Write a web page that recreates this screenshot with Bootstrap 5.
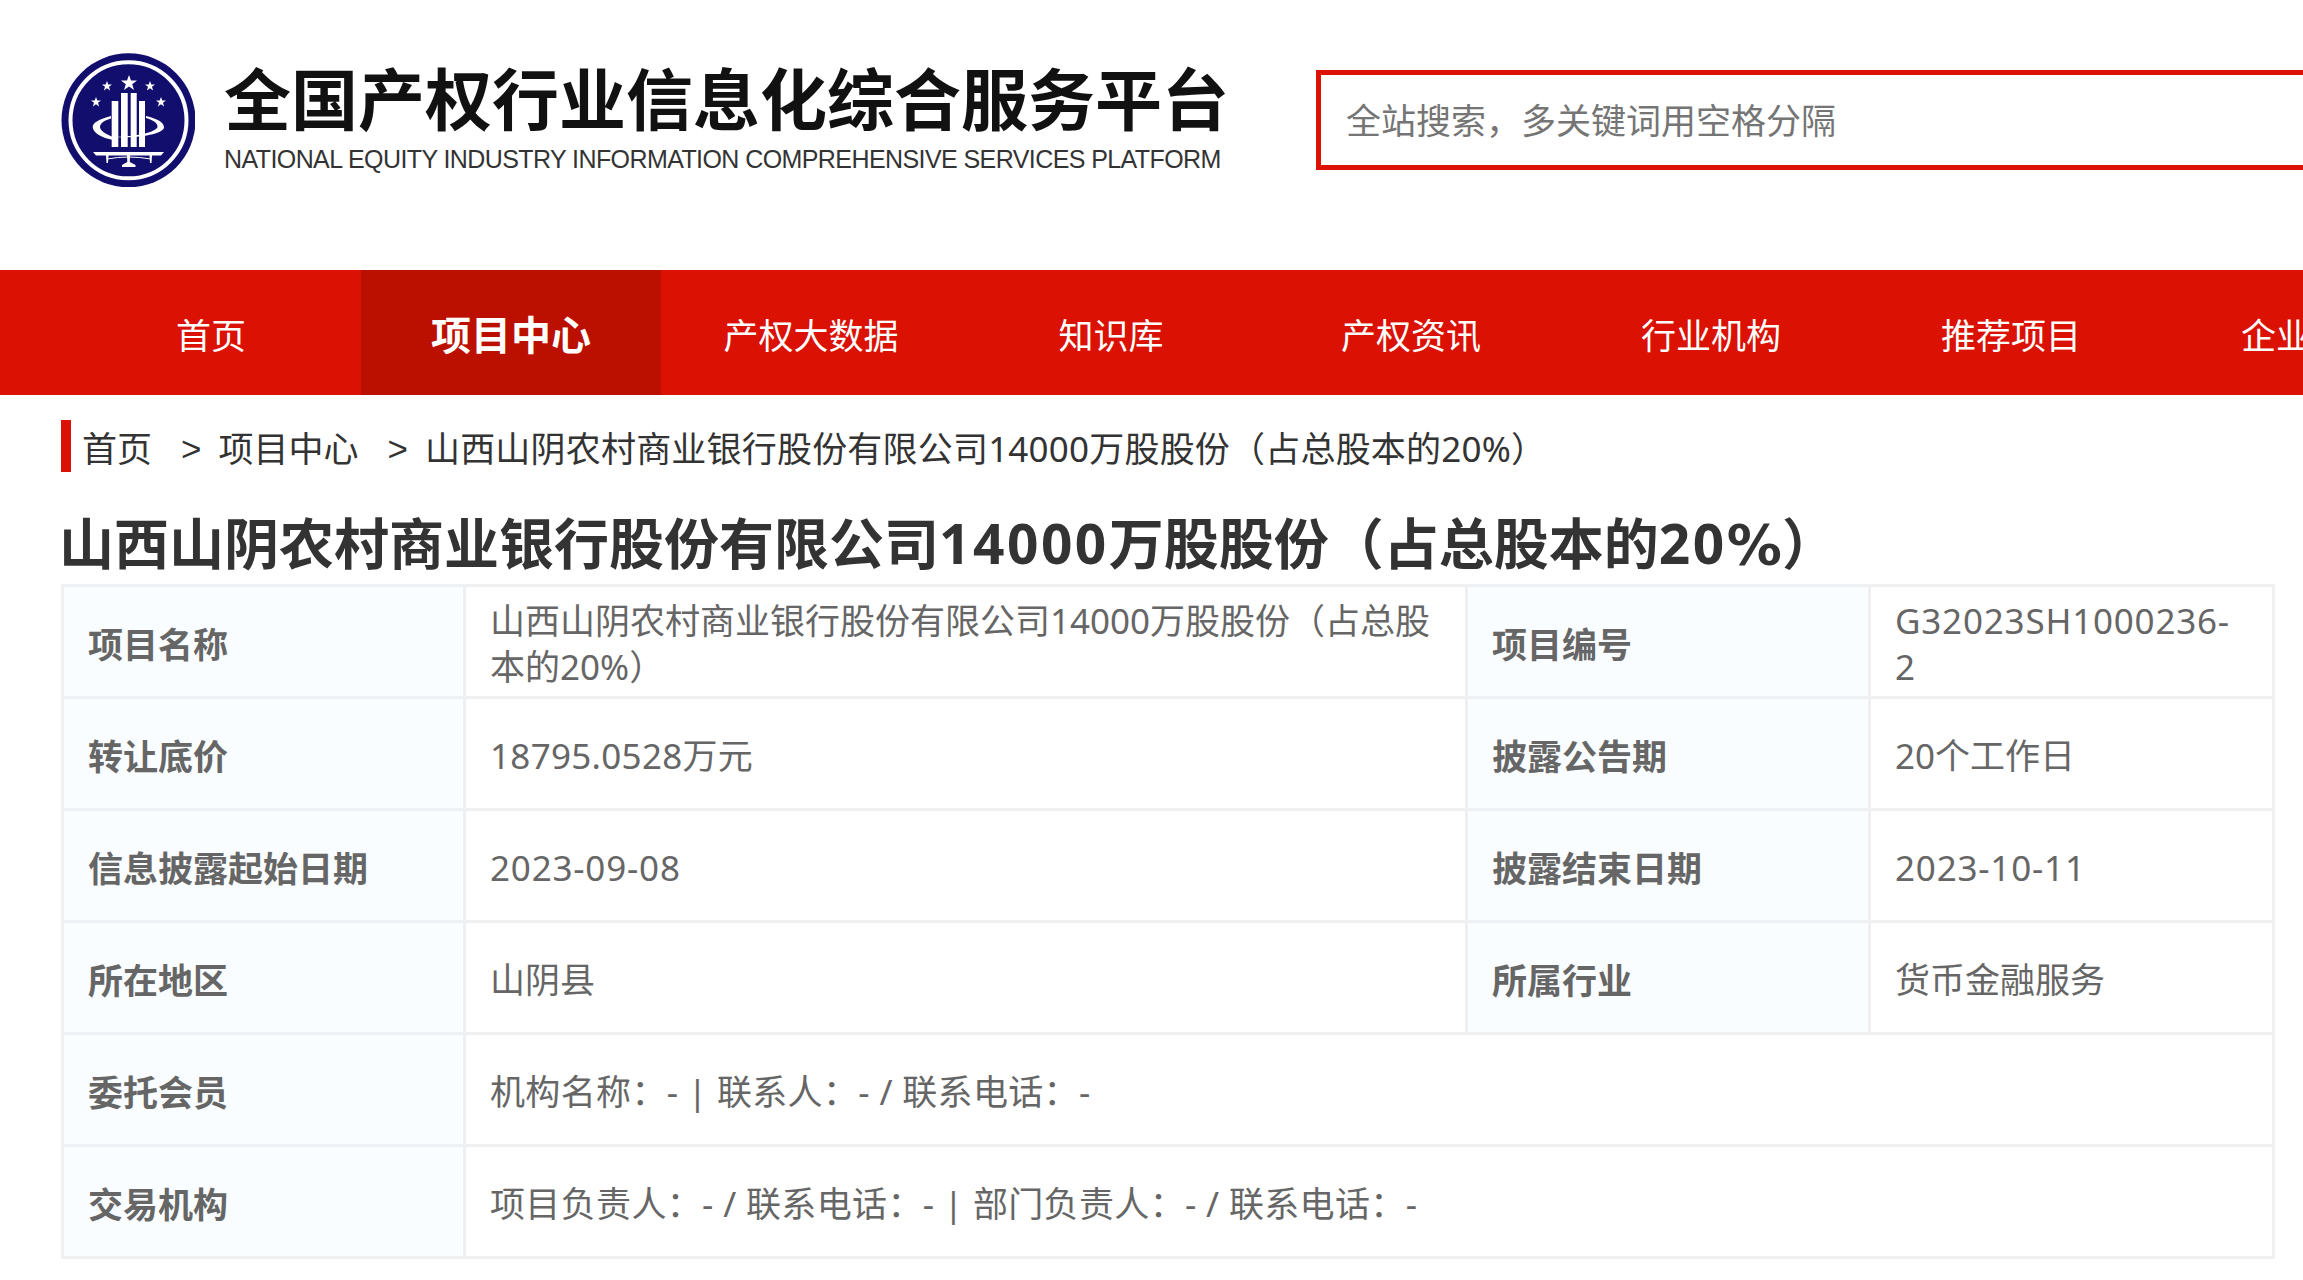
<!DOCTYPE html>
<html lang="zh-CN">
<head>
<meta charset="UTF-8" />
<meta name="viewport" content="width=device-width, initial-scale=1.0" />
<title>山西山阴农村商业银行股份有限公司14000万股股份（占总股本的20%）</title>
<link href="https://cdn.jsdelivr.net/npm/bootstrap@5.3.0/dist/css/bootstrap.min.css" rel="stylesheet" />
<style>
  html, body { overflow-x: hidden; }
  body { font-family: "Noto Sans", "Noto Sans CJK SC", sans-serif; color: #333; background: #fff; }
  .site-head { height: 270px; padding: 53px 0 0 61px; width: 2303px; overflow: hidden; }
  .site-logo { width: 134px; height: 134px; flex-shrink: 0; margin-right: 29px; }
  .site-name { width: 1001px; margin-right: 91px; flex-shrink: 0; white-space: nowrap; }
  .site-name-cn { font-family: "Noto Sans CJK SC", sans-serif; font-weight: 700; font-size: 67px; line-height: 80px; color: #111; margin-top: 3px; }
  .site-name-en { font-family: "Liberation Sans", sans-serif; font-size: 25px; line-height: 28px; letter-spacing: -.58px; color: #333; margin-top: 9px; }
  .site-search { width: 1200px; height: 100px; margin-top: 17px; flex-shrink: 0; border: 5px solid #da1103; font-size: 35px; padding: 0 25px; color: #333; background: #fff; }
  .site-search::placeholder { color: #757575; opacity: 1; }
  .main-nav { height: 125px; background: #da1103; padding-left: 61px; width: 2303px; overflow: hidden; }
  .main-nav .nav-link { width: 300px; height: 125px; padding: 7px 0 0; display: flex; align-items: center; justify-content: center; color: #fff; font-size: 35px; white-space: nowrap; }
  .main-nav .nav-link.active { background: #bb0f00; font-size: 40px; font-weight: 700; padding: 5px 0 0; }
  .page-body { padding: 25px 30px 0 61px; }
  .crumbs { border-left: 10px solid #da1103; height: 52px; padding: 3px 0 0 11px; font-size: 35px; line-height: 52px; color: #333; white-space: nowrap; }
  .crumb-sep { margin: 0 17px 0 29px; font-family: "Liberation Sans", sans-serif; }
  .crumb-last { letter-spacing: .2px; }
  .pct-wide { font-family: "DejaVu Sans", sans-serif; }
  .page-title { font-weight: 700; font-size: 55px; line-height: 70px; height: 70px; color: #333; margin: 36px 0 6px -2px; white-space: nowrap; }
  .title-num { letter-spacing: 2.5px; }
  .info-table { table-layout: fixed; width: 2211px; margin: 0; border-collapse: collapse; border: 3px solid #eef0f2; }
  .info-table th, .info-table td { border: 3px solid #eef0f2; padding: 10px 24px 6px; height: 112px; font-size: 35px; line-height: 46px; color: #666; vertical-align: middle; background: #fff; box-shadow: none; }
  .info-table th { background: #f9fdff; font-weight: 700; padding: 11px 24px 5px; }
  .info-table td.num-cell { letter-spacing: .8px; }
  .info-table td.money-cell { letter-spacing: .3px; }
  .info-table td.contact-cell { letter-spacing: .35px; }
</style>
</head>
<body>
  <header class="site-head d-flex align-items-start">
    <svg class="site-logo" viewBox="21 23 134 134" aria-label="全国产权行业信息化综合服务平台">
      <circle cx="88.500" cy="90.300" r="67" fill="#120e6e" />
      <circle cx="88.500" cy="90.300" r="58" fill="none" stroke="#fff" stroke-width="4" />
      <g fill="#fff">
        <polygon points="89,45 91,50.6 97,50.6 92.2,54.2 94,60 89,56.5 84,60 85.8,54.2 81,50.6 87,50.6" />
        <polygon points="67,51 68.3,54.5 72,54.5 69,56.8 70.1,60.4 67,58.2 63.9,60.4 65,56.8 62,54.5 65.7,54.5" />
        <polygon points="110,51 111.3,54.5 115,54.5 112,56.8 113.1,60.4 110,58.2 106.9,60.4 108,56.8 105,54.5 108.7,54.5" />
        <polygon points="56,67 57.3,70.5 61,70.5 58,72.8 59.1,76.4 56,74.2 52.9,76.4 54,72.8 51,70.5 54.7,70.5" />
        <polygon points="121,67 122.3,70.5 126,70.5 123,72.8 124.1,76.4 121,74.2 117.9,76.4 119,72.8 116,70.5 119.7,70.5" />
        <rect x="71.700" y="71" width="6.600" height="46" />
        <rect x="81" y="63" width="6.700" height="54" />
        <rect x="90.700" y="63" width="6" height="54" />
        <rect x="99" y="71" width="6" height="46" />
        <path d="M71 86C59 89 52.500 93 52.700 97C53 103 62 108 73 110L73 107C65 104 59.500 100 60 96.500C60.500 93 65 90 71 88.500Z" />
        <path d="M106 86C117 88.500 124.300 92.500 124 97.500C123.500 103 104 108.500 73 107C98 106.500 116 102 117.500 97C118 93 113 90 106 88Z" />
        <path d="M53 122H124L121 125.500H112L111.500 133H110L109.500 125.500H68.500L68 133H66.500L66 125.500H56Z" />
        <path d="M87 124H90L89.800 132L95.500 135V137H82V135L87.300 132Z" />
      </g>
      <path d="M67 129Q88 125 111 129" fill="none" stroke="#fff" stroke-width="1" />
    </svg>
    <div class="site-name">
      <div class="site-name-cn">全国产权行业信息化综合服务平台</div>
      <div class="site-name-en">NATIONAL EQUITY INDUSTRY INFORMATION COMPREHENSIVE SERVICES PLATFORM</div>
    </div>
    <input class="site-search form-control rounded-0 shadow-none" type="text" placeholder="全站搜索，多关键词用空格分隔" />
  </header>

  <ul class="main-nav nav flex-nowrap">
    <li class="nav-item"><a class="nav-link" href="#">首页</a></li>
    <li class="nav-item"><a class="nav-link active" href="#">项目中心</a></li>
    <li class="nav-item"><a class="nav-link" href="#">产权大数据</a></li>
    <li class="nav-item"><a class="nav-link" href="#">知识库</a></li>
    <li class="nav-item"><a class="nav-link" href="#">产权资讯</a></li>
    <li class="nav-item"><a class="nav-link" href="#">行业机构</a></li>
    <li class="nav-item"><a class="nav-link" href="#">推荐项目</a></li>
    <li class="nav-item"><a class="nav-link" href="#">企业服务</a></li>
  </ul>

  <main class="page-body">
    <div class="crumbs d-flex">
      <span>首页</span><span class="crumb-sep">&gt;</span><span>项目中心</span><span class="crumb-sep">&gt;</span><span class="crumb-last">山西山阴农村商业银行股份有限公司14000万股股份（占总股本的20%）</span>
    </div>
    <h1 class="page-title">山西山阴农村商业银行股份有限公司<span class="title-num">14000</span>万股股份（占总股本的<span class="title-num">20</span><span class="pct-wide">%</span>）</h1>
    <table class="info-table table">
      <colgroup>
        <col style="width: 402px" />
        <col style="width: 1002px" />
        <col style="width: 403px" />
        <col style="width: 404px" />
      </colgroup>
      <tbody>
        <tr>
          <th>项目名称</th>
          <td>山西山阴农村商业银行股份有限公司14000万股股份（占总股本的20%）</td>
          <th>项目编号</th>
          <td class="num-cell">G32023SH1000236-2</td>
        </tr>
        <tr>
          <th>转让底价</th>
          <td class="money-cell">18795.0528万元</td>
          <th>披露公告期</th>
          <td>20个工作日</td>
        </tr>
        <tr>
          <th>信息披露起始日期</th>
          <td class="num-cell">2023-09-08</td>
          <th>披露结束日期</th>
          <td class="num-cell">2023-10-11</td>
        </tr>
        <tr>
          <th>所在地区</th>
          <td>山阴县</td>
          <th>所属行业</th>
          <td>货币金融服务</td>
        </tr>
        <tr>
          <th>委托会员</th>
          <td class="contact-cell" colspan="3">机构名称：- | 联系人：- / 联系电话：-</td>
        </tr>
        <tr>
          <th>交易机构</th>
          <td class="contact-cell" colspan="3">项目负责人：- / 联系电话：- | 部门负责人：- / 联系电话：-</td>
        </tr>
      </tbody>
    </table>
  </main>

  <script src="https://cdn.jsdelivr.net/npm/bootstrap@5.3.0/dist/js/bootstrap.bundle.min.js"></script>
</body>
</html>
